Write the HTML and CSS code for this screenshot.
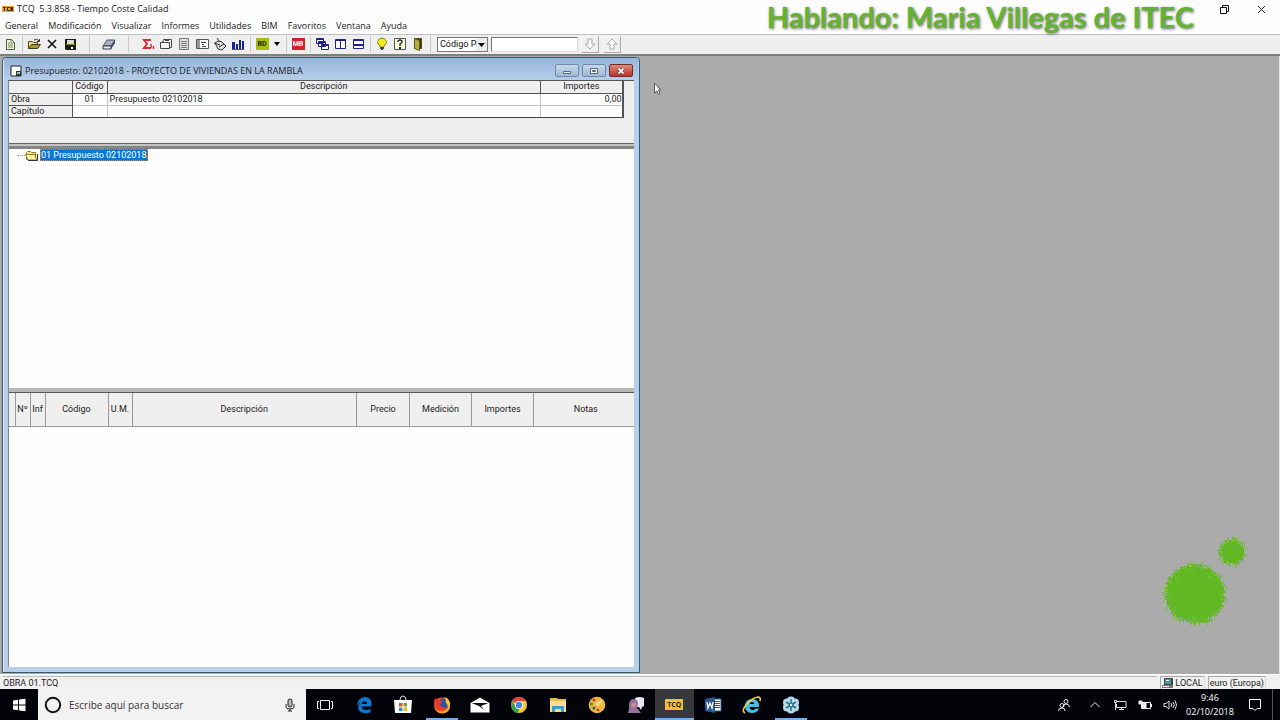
FILE: index.html
```html
<!DOCTYPE html>
<html lang="es">
<head>
	<meta charset="utf-8">
	<meta name="viewport" content="width=device-width, initial-scale=1">
	<title>TCQ 5.3.858 - Tiempo Coste Calidad</title>
	<link rel="stylesheet" href="styles.css">
</head>
<body>
	<header class="titlebar">
		<svg class="app-icon" width="12" height="8" viewBox="0 0 12 8"><rect y="1" width="12" height="6" fill="#f0a818"/><path d="M1 2h3v1H3v3H2V3H1zM5 2h3v1H6v2h2v1H5zM8.500 2H11v4H8.500z" fill="#3a2800"/></svg>
		<span class="app-title">TCQ&nbsp; 5.3.858 - Tiempo Coste Calidad</span>
		<button class="caption-btn" aria-label="Restaurar"><svg width="9" height="9" viewBox="0 0 9 9" fill="none" stroke="#111"><path d="M.5 2.500h6v6h-6zM2.500 2V.5h6v6H7"/></svg></button>
		<button class="caption-btn" aria-label="Cerrar"><svg width="9" height="9" viewBox="0 0 9 9" stroke="#222"><path d="M1 1l7 7M8 1L1 8"/></svg></button>
	</header>

	<nav class="menubar">
		<a href="#">General</a>
		<a href="#">Modificación</a>
		<a href="#">Visualizar</a>
		<a href="#">Informes</a>
		<a href="#">Utilidades</a>
		<a href="#">BIM</a>
		<a href="#">Favoritos</a>
		<a href="#">Ventana</a>
		<a href="#">Ayuda</a>
	</nav>

	<div class="toolbar">
		<button aria-label="Nuevo"><svg width="14" height="14" viewBox="0 0 14 14"><path d="M3.500 2.500h5l3 3v7h-8z" fill="#f4f8e4" stroke="#4a5a3c"/><path d="M8 3v3h3M5 6h2M5 8h5M5 10h5" fill="none" stroke="#6f8450"/></svg></button>
		<span class="sep"></span>
		<button aria-label="Abrir"><svg width="14" height="14" viewBox="0 0 14 14"><path d="M1.500 11.500v-7h4l1 1h4v2" fill="#eee46c" stroke="#4c4a14"/><path d="M1.500 11.500l3-4h9l-3 4z" fill="#a39a2c" stroke="#3c3a10"/><path d="M7 3q3-2 5 1M12.500 2v2.500H10" fill="none" stroke="#333"/></svg></button>
		<button aria-label="Cerrar obra"><svg width="14" height="14" viewBox="0 0 14 14"><path d="M3 3l8 8M11 3l-8 8" stroke="#111" stroke-width="1.600"/></svg></button>
		<button aria-label="Guardar"><svg width="14" height="14" viewBox="0 0 14 14"><path d="M2 2h11v11H3l-1-1z" fill="#1c1e14"/><path d="M4 3h7v4H4z" fill="#d8dccc"/><path d="M3 7h9v1H3z" fill="#78803c"/><path d="M8 10h2v2H8z" fill="#fff"/></svg></button>
		<span class="sep wide"></span>
		<button aria-label="Imprimir"><svg width="14" height="14" viewBox="0 0 14 14"><path d="M1 9l4-6h8l-4 6z" fill="#aab0c6" stroke="#53566c"/><path d="M1 9h8v3H1z" fill="#f4f4f8" stroke="#30344c"/><path d="M9 9l4-6v3l-4 6z" fill="#3c4268"/></svg></button>
		<span class="sep wide"></span>
		<button aria-label="Sumar"><svg width="14" height="14" viewBox="0 0 14 14" fill="none" stroke="#d92c33" stroke-width="2"><path d="M9 4V3H3l3 4-3 4h6v-1"/><path d="M10 7v4M12.500 9v3" stroke-width="1.500"/></svg></button>
		<button aria-label="Carpeta"><svg width="14" height="14" viewBox="0 0 14 14" fill="#f4f4f4" stroke="#444"><path d="M3.500 5.500l1-3h8v8h-2"/><path d="M1.500 5.500h9v6h-9z"/><path d="M6 3.500h4"/></svg></button>
		<button aria-label="Documento"><svg width="14" height="14" viewBox="0 0 14 14" fill="#e3e3e3" stroke="#777"><path d="M2.500 1.500h9v11h-9zM4 4.500h6M4 6.500h6M4 8.500h6M4 10.500h6"/></svg></button>
		<button aria-label="Ficha"><svg width="14" height="14" viewBox="0 0 14 14"><path d="M1.500 2.500h12v9h-12z" fill="#fff" stroke="#555"/><path d="M2 3h3v8H2z" fill="#999"/><path d="M6 5h5v1H6zM7 7h2v1H7zM7 9h4v1H7z" fill="#444"/></svg></button>
		<button aria-label="Medir"><svg width="14" height="14" viewBox="0 0 14 14" stroke="#333"><path d="M2 6l3-2 4 1 4 4-4 4-4-1z" fill="#ddd"/><path d="M4 1l3 4M1 6l6 2M6 10l5-3" fill="none"/></svg></button>
		<button aria-label="Gráfico"><svg width="14" height="14" viewBox="0 0 14 14" fill="#1620a0"><path d="M1 5h3v7H1zM5 7h2v5H5zM8 3h2v9H8zM11 4h2v8h-2z"/><path d="M1 12h12v1H1z" fill="#555"/></svg></button>
		<span class="sep"></span>
		<button class="badge-btn" aria-label="Banco de datos"><span class="tool-badge bd">BD</span></button>
		<button class="narrow" aria-label="Más bancos"><svg width="6" height="4" viewBox="0 0 6 4"><path d="M0 0h6L3 4z"/></svg></button>
		<span class="sep"></span>
		<button class="badge-btn" aria-label="Metabase"><span class="tool-badge mb">MB</span></button>
		<span class="sep"></span>
		<button aria-label="Cascada"><svg width="14" height="14" viewBox="0 0 14 14" fill="#fff" stroke="#20208c"><path d="M1.500 1.500h7v5h-7zM3.500 4.500h7v5h-7zM6.500 7.500h7v5h-7z"/><path d="M1 2.500h8M3 5.500h8M6 8.500h8"/></svg></button>
		<button aria-label="Mosaico vertical"><svg width="14" height="14" viewBox="0 0 14 14" fill="#fff" stroke="#20208c"><path d="M2.500 2.500h10v9h-10zM7.500 3v8M2 3.500h11"/></svg></button>
		<button aria-label="Mosaico horizontal"><svg width="14" height="14" viewBox="0 0 14 14" fill="#fff" stroke="#20208c"><path d="M2.500 2.500h10v9h-10zM2 3.500h11M2 7.500h11M2 8.500h11"/></svg></button>
		<span class="sep"></span>
		<button aria-label="Sugerencia"><svg width="14" height="14" viewBox="0 0 14 14"><path d="M5 9Q2 7 2.500 4.500 4 1 7 1t4.500 3.500Q12 7 9 9v1H5z" fill="#f5ec20" stroke="#8a8420"/><path d="M5 10h4v2H8v1H6v-1H5z" fill="#444"/></svg></button>
		<button aria-label="Ayuda"><svg width="14" height="14" viewBox="0 0 14 14"><path d="M1.500 1.500h11v11h-11z" fill="#fbfbe0" stroke="#555"/><path d="M5 5q0-2 2-2t2 2q0 1-2 2v2" fill="none" stroke="#222" stroke-width="1.400"/><path d="M6 10h2v2H6z" fill="#222"/></svg></button>
		<button aria-label="Salir"><svg width="14" height="14" viewBox="0 0 14 14"><path d="M3.500 1.500h7v10h-7z" fill="#3f3e18" stroke="#4c4a18"/><path d="M3.500 1.500l5 2v10l-5-2z" fill="#b8ae3a" stroke="#5c581c"/></svg></button>
		<span class="sep"></span>
		<select aria-label="Buscar por"><option>Código P</option></select>
		<input type="text" class="tool-search" aria-label="Buscar código">
		<button class="raised" aria-label="Siguiente"><svg width="12" height="12" viewBox="0 0 12 12" fill="#f8f8f8" stroke="#aaa"><path d="M4 1h4v5h3l-5 5-5-5h3z"/></svg></button>
		<button class="raised" aria-label="Anterior"><svg width="12" height="12" viewBox="0 0 12 12" fill="#f8f8f8" stroke="#aaa"><path d="M4 11h4V6h3L6 1 1 6h3z"/></svg></button>
	</div>

	<main class="workspace">
		<section class="mdi">
			<div class="mdi-title">
				<svg width="12" height="12" viewBox="0 0 12 12"><path d="M1 1h10v10H1z" fill="#fff" stroke="#222"/><path d="M6 6h5v5H6z" fill="#333"/><path d="M7 7h3v2H7z" fill="#9cb"/></svg>
				<h1>Presupuesto: 02102018 - PROYECTO DE VIVIENDAS EN LA RAMBLA</h1>
				<button aria-label="Minimizar"><svg width="10" height="8" viewBox="0 0 10 8"><path d="M1.500 4.500h7v2h-7z" fill="#fff" stroke="#567"/></svg></button>
				<button aria-label="Maximizar"><svg width="10" height="8" viewBox="0 0 10 8"><path d="M1.500 1.500h7v5h-7zM3.500 3.500h3v1h-3z" fill="#fff" stroke="#567"/></svg></button>
				<button class="close" aria-label="Cerrar ventana"><svg width="10" height="8" viewBox="0 0 10 8"><path d="M2.500 1.500l5 5M7.500 1.500l-5 5" stroke="#5c2020" stroke-width="3"/><path d="M2.500 1.500l5 5M7.500 1.500l-5 5" stroke="#fff" stroke-width="1.800"/></svg></button>
			</div>
			<div class="mdi-body">
				<div class="summary">
					<table class="summary-table">
						<colgroup><col class="w-label"><col class="w-code"><col><col class="w-amount"></colgroup>
						<thead>
							<tr><th></th><th>Código</th><th>Descripción</th><th>Importes</th></tr>
						</thead>
						<tbody>
							<tr><th>Obra</th><td class="center">01</td><td>Presupuesto 02102018</td><td class="num">0,00</td></tr>
							<tr><th>Capítulo</th><td></td><td></td><td></td></tr>
						</tbody>
					</table>
				</div>
				<div class="splitter"></div>
				<ul class="tree">
					<li>
						<span class="branch"></span>
						<svg width="13" height="11" viewBox="0 0 13 11"><path d="M1.500 9.500v-7l1-1h3l1 1h4v7z" fill="#f3e884" stroke="#8c8030"/><path d="M.5 4.500h9l2.500 5.500H3z" fill="#fff7a8" stroke="#8c8030"/><path d="M3 10.500h9.500V4" fill="none" stroke="#333"/></svg>
						<a href="#" class="selected">01 Presupuesto 02102018</a>
					</li>
				</ul>
				<div class="splitter lower"></div>
				<div class="lines">
					<table class="lines-table">
						<colgroup><col class="c-mark"><col class="c-small"><col class="c-small"><col class="c-code"><col class="c-unit"><col><col class="c-price"><col class="c-amount"><col class="c-amount"><col class="c-notes"></colgroup>
						<thead>
							<tr><th></th><th>Nº</th><th>Inf</th><th>Código</th><th>U.M.</th><th>Descripción</th><th>Precio</th><th>Medición</th><th>Importes</th><th>Notas</th></tr>
						</thead>
					</table>
				</div>
			</div>
		</section>
	</main>

	<footer class="statusbar">
		<span class="status-file">OBRA 01.TCQ</span>
		<span class="status-cell local"><svg width="12" height="10" viewBox="0 0 12 10"><path d="M2 0h9v7H2z" fill="#444"/><path d="M3 1h6v5H3z" fill="#4b97a8"/><path d="M4 2h3v1H4z" fill="#fff"/><path d="M0 7h11v3H0z" fill="#777"/><path d="M1 8h6v1H1z" fill="#eee"/></svg>LOCAL</span>
		<span class="status-cell">euro (Europa)</span>
	</footer>

	<div class="taskbar">
		<button class="start" aria-label="Inicio"><svg width="14" height="14" viewBox="0 0 14 14" fill="#fff"><path d="M1 2.500l5-.7v4.700H1zM7 1.600L13.500.7v5.800H7zM1 7.500h5v4.700l-5-.7zM7 7.500h6.500v5.800L7 12.400z"/></svg></button>
		<label class="search">
			<svg width="18" height="18" viewBox="0 0 18 18"><circle cx="9" cy="9" r="7.200" fill="none" stroke="#111" stroke-width="2"/></svg>
			<input type="text" placeholder="Escribe aquí para buscar" aria-label="Escribe aquí para buscar">
			<svg width="10" height="14" viewBox="0 0 10 14" fill="none" stroke="#222"><rect x="3" y="1" width="4" height="8" rx="2" fill="#bbb"/><path d="M1 6v3q0 2 4 2t4-2V6M5 11v2M3 13h4"/></svg>
		</label>
		<div class="tasks">
			<button aria-label="Vista de tareas"><svg width="18" height="14" viewBox="0 0 18 14" fill="none" stroke="#eee"><path d="M4.500 2.500h9v9h-9zM3 3.500H1.500v7H3M15 3.500h1.500v7H15"/></svg></button>
			<button aria-label="Edge"><svg width="18" height="18" viewBox="0 0 18 18"><path d="M2 9.500Q2.500 2 9.500 1q7 .3 7 7v2.500H6.500q.5 3.500 4.500 3.500 2.500 0 4.500-1.200v3.400q-2.500 1-5.500 1Q3.500 17 3.200 11 3.500 7.500 7 5.800 4 6.200 2 9.500zM6.700 8h5.400q0-2.800-2.600-2.800Q7 5.500 6.700 8z" fill="#0c78d0" fill-rule="evenodd"/></svg></button>
			<button aria-label="Tienda"><svg width="20" height="19" viewBox="0 0 20 19"><path d="M7 5q0-4 3-4t3 4" fill="none" stroke="#ddd"/><path d="M1 5h18l-1 13H2z" fill="#fff"/><path d="M6 8h3.500v3.500H6z" fill="#e85022"/><path d="M10.500 8H14v3.500h-3.500z" fill="#70a824"/><path d="M6 12.500h3.500V16H6z" fill="#1896d8"/><path d="M10.500 12.500H14V16h-3.500z" fill="#f4b41c"/></svg></button>
			<button class="running" aria-label="Firefox"><svg width="18" height="18" viewBox="0 0 18 18"><circle cx="9" cy="9.500" r="8" fill="#ef6022"/><circle cx="10" cy="8" r="5.500" fill="#2357a8"/><path d="M11 1q5 1 6 6 .5 5-3 8 2-6-1-8 0-4-2-6z" fill="#ffc229"/><path d="M1 6q0-3 2-4l1 2q3-1 4 1l2 1-3 2q1 4 6 3-2 4-6 3-5-1-6-8z" fill="#e9382d"/><path d="M2 13q5 5 11 1 3-2 3-5 2 5-3 7.500Q6 19 2 13z" fill="#fbac22"/></svg></button>
			<button aria-label="Correo"><svg width="20" height="16" viewBox="0 0 20 16"><path d="M.5 6L10 .5 19.500 6v9.500H.5z" fill="#fff"/><path d="M1.500 6h17L11 9l3 4-5-4z" fill="#111"/></svg></button>
			<button aria-label="Chrome"><svg width="18" height="18" viewBox="0 0 18 18"><circle cx="9" cy="9" r="8" fill="#f8c832"/><path d="M9 9L2 5Q4.500 1 9 1t7 4H9z" fill="#dd4337"/><path d="M2 5l4 6.500L9 13l-1 4Q2 16 1 10 .8 7 2 5z" fill="#2f9e50"/><circle cx="9" cy="9" r="4" fill="#fff"/><circle cx="9" cy="9" r="3.200" fill="#4a86e0"/></svg></button>
			<button aria-label="Explorador"><svg width="18" height="16" viewBox="0 0 18 16"><path d="M1 3V1h7l1 1h8v13H1z" fill="#e5bc55"/><path d="M1 4h16v11H1z" fill="#f9df8c"/><path d="M3 15V9h12v6h-3v-3H6v3z" fill="#3f9ed0"/></svg></button>
			<button aria-label="Paleta"><svg width="18" height="18" viewBox="0 0 18 18"><circle cx="9" cy="9" r="8.300" fill="#f0b545"/><path d="M8 8q4-4 7-4-2 3-5 6z" fill="#ffe58f"/><circle cx="6" cy="4" r="1.500" fill="#c63a2a"/><circle cx="3.500" cy="8" r="1.500" fill="#4d8a32"/><circle cx="6" cy="12" r="1.500" fill="#27634d"/><circle cx="10" cy="14" r="1.300" fill="#b33c22"/></svg></button>
			<button aria-label="Chat"><svg width="18" height="18" viewBox="0 0 18 18"><path d="M8 2q5-2 9 0v8l-2 1-1 3-2-3H9z" fill="#e7e6f4"/><path d="M2 9q0-5 4-6 5 0 5 5l-1 4 4 5H1l1-4z" fill="#94709a"/><path d="M5 7h4v2l-2 3-3-2z" fill="#c88f95"/></svg></button>
			<button class="running active" aria-label="TCQ"><span class="tcq">TCQ</span></button>
			<button aria-label="Word"><svg width="18" height="16" viewBox="0 0 18 16"><path d="M8 2h9v12H8z" fill="#fff" stroke="#2a5699"/><path d="M11 4.500h5M11 6.500h5M11 8.500h5M11 10.500h5" stroke="#2a5699"/><path d="M1 2l10-2v16L1 14z" fill="#2a5699"/><path d="M3 5l1 6 2-5 2 5 1-6" fill="none" stroke="#fff" stroke-width="1.300"/></svg></button>
			<button aria-label="Internet Explorer"><svg width="20" height="18" viewBox="0 0 20 18"><path d="M3 10q0-7 7.500-7 7 .5 6.500 8H7.500q.5 3 3 3 2 0 3-1.500H17q-2 4.500-7 4.500-7-.5-7-7zM7.500 8h5q-.5-2-2.500-2T7.500 8z" fill="#4dbce8" fill-rule="evenodd"/><path d="M3 17q-4-2 1-8 6-7 12-8 3 0 2 4" fill="none" stroke="#f2d03b" stroke-width="1.600"/></svg></button>
			<button class="running" aria-label="GoToMeeting"><svg width="18" height="18" viewBox="0 0 18 18"><g fill="#b5dbe8"><circle cx="9" cy="4.500" r="4"/><circle cx="13" cy="6.500" r="4"/><circle cx="13" cy="11.500" r="4"/><circle cx="9" cy="13.500" r="4"/><circle cx="5" cy="11.500" r="4"/><circle cx="5" cy="6.500" r="4"/></g><path d="M9 3v12M4 6l10 6M14 6L4 12" stroke="#28708f" stroke-width="1.500"/><circle cx="9" cy="9" r="2.500" fill="#28708f"/><circle cx="9" cy="9" r="1.200" fill="#fff"/></svg></button>
		</div>
		<div class="tray">
			<button class="people" aria-label="Contactos"><svg width="14" height="14" viewBox="0 0 14 14" fill="none" stroke="#eee"><circle cx="9" cy="3.500" r="2"/><path d="M6 9q0-3 3-3t3.500 3"/><circle cx="5" cy="7.500" r="2"/><path d="M1.500 13q0-3 3.500-3t3 3"/></svg></button>
			<button aria-label="Iconos ocultos"><svg width="12" height="8" viewBox="0 0 12 8" fill="none" stroke="#eee"><path d="M1.500 6L6 1.500 10.500 6"/></svg></button>
			<button aria-label="Red"><svg width="14" height="12" viewBox="0 0 14 12" fill="none" stroke="#ddd"><path d="M4 2.500h9v6H3.500V5M1.500 1.500h2v2h-2zM2.500 4v7M6 10.500h5M8.500 9v1"/></svg></button>
			<button aria-label="Batería"><svg width="14" height="10" viewBox="0 0 14 10" fill="none" stroke="#eee"><path d="M3.500 2.500h9v6h-9z"/><path d="M4 3h4v5H4zM1 1h3v3H1z" fill="#eee"/><path d="M13.500 4v3"/></svg></button>
			<button aria-label="Volumen"><svg width="14" height="12" viewBox="0 0 14 12" fill="none" stroke="#ddd"><path d="M1 4.500h2L6 2v8L3 7.500H1zM8 4q1.500 2 0 4M10 3q2.500 3 0 6M12 1.500q3 4.500 0 9"/></svg></button>
			<div class="clock"><time>9:46</time><span>02/10/2018</span></div>
			<button class="notify" aria-label="Notificaciones"><svg width="14" height="14" viewBox="0 0 14 14" fill="none" stroke="#fff"><path d="M1.500 1.500h11v9H9L7 12.500l-2-2H1.500z"/></svg></button>
			<button class="show-desktop" aria-label="Mostrar escritorio"></button>
		</div>
	</div>

	<div class="speaker">Hablando: Maria Villegas de ITEC</div>
	<svg class="splash" width="96" height="104" viewBox="0 0 96 104">
		<filter id="rough" x="-20%" y="-20%" width="140%" height="140%">
			<feTurbulence type="fractalNoise" baseFrequency="0.6" numOctaves="2" seed="4"/>
			<feDisplacementMap in="SourceGraphic" scale="14" xChannelSelector="R" yChannelSelector="G"/>
		</filter>
		<g filter="url(#rough)">
			<g fill="#61b822"><circle cx="39" cy="64" r="30"/><circle cx="76" cy="22" r="13"/></g>
			<g fill="none" stroke="#a4c88c" stroke-dasharray="1 5 2 4 1 7"><circle cx="39" cy="64" r="31"/><circle cx="39" cy="64" r="28"/><circle cx="39" cy="64" r="24" stroke-dasharray="1 9"/><circle cx="76" cy="22" r="13"/></g>
		</g>
	</svg>
	<svg class="cursor" width="10" height="14" viewBox="0 0 10 14"><path d="M1.500 1v10l2.500-2 1.500 3.500 1.500-1L5.500 8H8z" fill="#fff" stroke="#555"/></svg>
</body>
</html>
```

FILE: styles.css
```css
* {
	box-sizing: border-box;
}

body {
	margin: 0;
	height: 100vh;
	display: flex;
	flex-direction: column;
	overflow: hidden;
	position: relative;
	background: #fdfdfd;
	color: #222;
	font-family: Roboto, "Liberation Sans", sans-serif;
	font-size: 9px;
	line-height: 12px;
}

button {
	display: flex;
	align-items: center;
	justify-content: center;
	margin: 0;
	padding: 0;
	border: 0;
	background: none;
	font: inherit;
}

a {
	color: inherit;
	text-decoration: none;
}

svg {
	display: block;
	flex: none;
}

table {
	border-collapse: collapse;
	table-layout: fixed;
	width: 100%;
}

th {
	font-weight: normal;
}

/* application frame */
.titlebar {
	display: flex;
	align-items: center;
	height: 18px;
	padding-left: 2px;
	font-family: "Open Sans", sans-serif;
}

.app-title {
	flex: 1;
	padding-left: 3px;
}

.caption-btn {
	width: 37px;
	height: 18px;
}

.menubar {
	display: flex;
	gap: 10px;
	height: 16px;
	padding: 2px 5px;
	font-family: "Open Sans", sans-serif;
}

.toolbar {
	display: flex;
	align-items: center;
	height: 22px;
	padding: 0 0 1px 1px;
	background: #efefef;
	border-top: 1px solid #c0c0c0;
	border-bottom: 2px solid #808080;
}

.toolbar button {
	width: 18px;
	height: 17px;
}

.toolbar .narrow {
	width: 12px;
}

.sep {
	width: 6px;
	height: 16px;
	background: linear-gradient(#c8c8c8, #c8c8c8) center / 1px 100% no-repeat;
}

.sep.wide {
	width: 21px;
}

.tool-badge {
	width: 13px;
	height: 12px;
	font-size: 7px;
	font-weight: bold;
}

.bd {
	background: #a9bd12;
	color: #1c2000;
}

.mb {
	background: #d3202b;
	color: #fff;
}

.toolbar select {
	appearance: none;
	width: 51px;
	height: 15px;
	margin-left: 4px;
	padding: 0 2px;
	border: 1px solid #777;
	border-radius: 0;
	background: #fff url("data:image/svg+xml,%3Csvg xmlns='http://www.w3.org/2000/svg' width='11' height='13'%3E%3Cpath fill='%23ececec' d='M0 0h11v13H0z'/%3E%3Cpath d='M2 5h7L5.500 9z'/%3E%3C/svg%3E") right center no-repeat;
	font: inherit;
	color: #111;
}

.tool-search {
	width: 87px;
	height: 15px;
	margin: 0 3px;
	border: 1px solid #ddd;
	border-top-color: #777;
	border-left-color: #777;
	background: #fff;
	font: inherit;
}

.toolbar .raised {
	margin-right: 4px;
	border: 1px solid #aaa;
	border-top-color: #f8f8f8;
	border-left-color: #f8f8f8;
}

/* document window */
.workspace {
	flex: 1;
	min-height: 0;
	display: flex;
	padding: 1px 0 1px 2px;
	background: #ababab;
	border-right: 1px solid #e4e4e4;
}

.mdi {
	width: calc(50% - 1px);
	display: flex;
	flex-direction: column;
	padding: 0 5px 5px;
	border: 1px solid #35596f;
	border-radius: 4px 4px 0 0;
	background: #b6d0ea;
	box-shadow: inset 1px 1px #e2effa;
}

.mdi-title {
	display: flex;
	align-items: center;
	gap: 3px;
	height: 22px;
	margin: 0 -4px;
	padding: 3px 5px 0 6px;
	background: linear-gradient(#97b6dc, #b4cdea);
	font-family: "Open Sans", sans-serif;
}

.mdi-title h1 {
	flex: 1;
	margin: 0;
	font-size: 9px;
	font-weight: normal;
	white-space: nowrap;
}

.mdi-title button {
	width: 24px;
	height: 13px;
	border: 1px solid #7289a6;
	border-radius: 2px;
	background: linear-gradient(#c8d9ec, #9db7d6);
}

.mdi-title .close {
	border-color: #792b2b;
	background: linear-gradient(#dc8c80, #bd3026);
}

.mdi-body {
	flex: 1;
	min-height: 0;
	display: flex;
	flex-direction: column;
	border-top: 1px solid #555;
	border-left: 1px solid #888;
	background: #fdfdfd;
}

.summary {
	height: 62px;
	padding-right: 10px;
	background: #efeeee;
}

.summary-table {
	border-right: 2px solid #555;
	border-bottom: 1px solid #444;
	line-height: 11px;
}

.summary-table th,
.summary-table td {
	height: 12px;
	padding: 0 2px;
	border-right: 1px solid #c4c4c4;
	border-bottom: 1px solid #c4c4c4;
	background: #fff;
	text-align: left;
}

.summary-table th {
	background: #efefef;
	border-color: #555;
}

.summary-table tbody tr:last-child td {
	border-bottom-color: #444;
}

.summary-table thead th {
	text-align: center;
}

.summary-table .center {
	text-align: center;
}

.summary-table .num {
	padding-right: 0;
	text-align: right;
}

.w-label {
	width: 63px;
}

.w-code {
	width: 35px;
}

.w-amount {
	width: 82px;
}

.splitter {
	height: 6px;
	background: #c4c4c4;
	border-top: 1px solid #666;
	border-bottom: 3px solid #858585;
}

.splitter.lower {
	height: 5px;
	background: #b8b8b8;
	border-top: 0;
	border-bottom: 1px solid #555;
}

.tree {
	height: 239px;
	margin: 0;
	padding: 0 0 0 8px;
	list-style: none;
}

.tree li {
	display: flex;
	align-items: center;
}

.branch {
	width: 8px;
	border-top: 1px dotted #999;
}

.selected {
	margin-left: 2px;
	padding: 0 1px;
	background: #0878d4;
	color: #fff;
	outline: 1px dotted #d08840;
	outline-offset: -1px;
}

.lines {
	flex: 1;
	min-height: 0;
}

.lines-table th {
	height: 33px;
	padding: 0;
	border-right: 1px solid #999;
	border-bottom: 1px solid #999;
	background: #efefef;
}

.lines-table th:last-child {
	border-right: 0;
	padding-left: 4px;
}

.c-mark {
	width: 6px;
}

.c-small {
	width: 15px;
}

.c-code {
	width: 63px;
}

.c-unit {
	width: 24px;
}

.c-price {
	width: 53px;
}

.c-amount {
	width: 62px;
}

.c-notes {
	width: 100px;
}

/* status bar */
.statusbar {
	display: flex;
	align-items: center;
	gap: 3px;
	height: 15px;
	padding: 1px 14px 0 3px;
	background: #f0f0f0;
	border-top: 1px solid #fff;
}

.status-file {
	flex: 1;
	border-top: 1px solid #bbb;
}

.status-cell {
	display: flex;
	align-items: center;
	padding: 0 1px;
	border-top: 1px solid #aaa;
	border-left: 1px solid #aaa;
	border-right: 1px solid #ddd;
}

.local {
	gap: 1px;
}

/* Windows taskbar */
.taskbar {
	display: flex;
	height: 31px;
	background: #020409;
	color: #fff;
	font-family: "Open Sans", sans-serif;
}

.start {
	width: 38px;
}

.search {
	display: flex;
	align-items: center;
	gap: 7px;
	width: 268px;
	padding: 0 11px 0 6px;
	background: #f2f2f2;
}

.search input {
	flex: 1;
	min-width: 0;
	padding: 0;
	border: 0;
	background: none;
	font-family: inherit;
	font-size: 10px;
}

.search input::placeholder {
	color: #333;
	opacity: 1;
}

.tasks {
	display: flex;
	width: 504px;
}

.tasks button {
	flex: 1;
	border-bottom: 2px solid transparent;
	border-top: 2px solid transparent;
}

.tasks .running {
	background: linear-gradient(#76aee4, #76aee4) center bottom / 32px 2px no-repeat border-box;
}

.tasks .active {
	background: #36383c;
	border-top-color: #36383c;
	border-bottom-color: #76aee4;
}

.tcq {
	padding: 0 2px;
	background: #f5bd35;
	color: #30240a;
	font-size: 7px;
	font-weight: bold;
	line-height: 11px;
}

.tray {
	display: flex;
	margin-left: auto;
}

.tray button {
	width: 25px;
}

.tray .people {
	margin-right: 6px;
}

.clock {
	display: flex;
	flex-direction: column;
	align-items: center;
	width: 56px;
	padding-top: 2px;
	line-height: 14px;
}

.tray .notify {
	width: 34px;
}

.tray .show-desktop {
	width: 8px;
	border-left: 1px solid #555;
}

/* things floating over the desktop */
.speaker {
	position: absolute;
	top: 0;
	right: 86px;
	color: #62b32e;
	font-family: Lato, sans-serif;
	font-size: 29px;
	font-weight: bold;
	line-height: 34px;
	text-shadow: 1px 1px 3px #666;
	pointer-events: none;
}

.splash {
	position: absolute;
	right: 28px;
	bottom: 86px;
}

.cursor {
	position: absolute;
	left: 653px;
	top: 82px;
}
```
